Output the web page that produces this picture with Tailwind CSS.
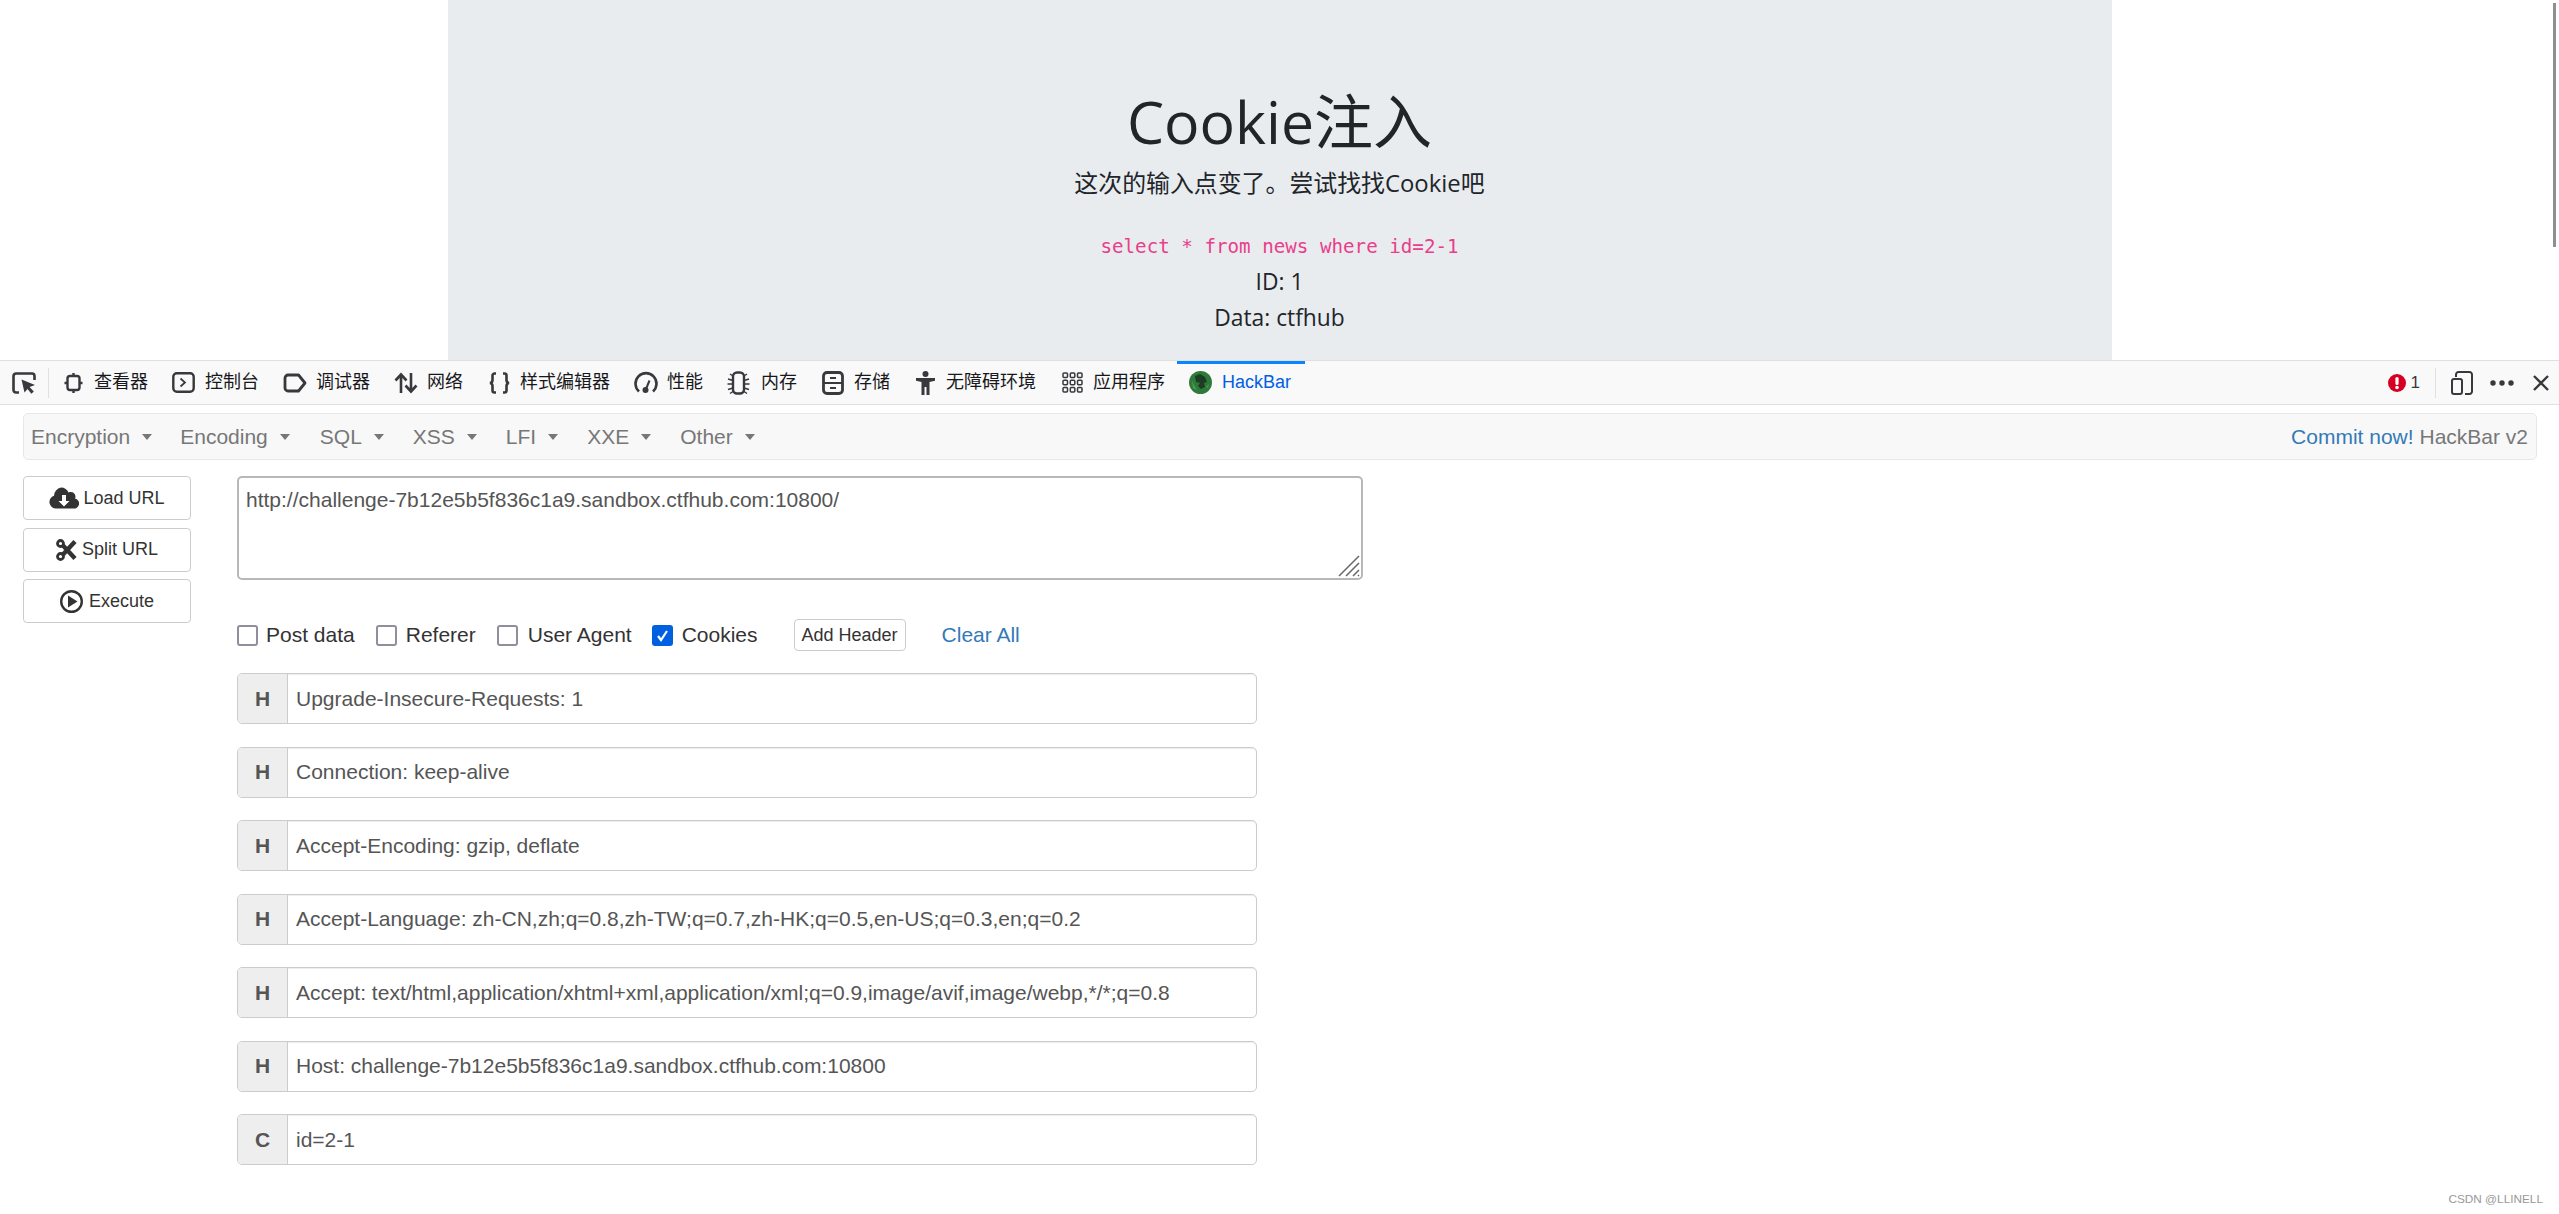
<!DOCTYPE html>
<html lang="zh-CN">
  <head>
    <meta charset="UTF-8" />
    <title>Cookie注入</title>
    <script src="https://cdn.jsdelivr.net/npm/@tailwindcss/browser@4"></script>
  </head>
  <body class="relative h-[1214px] overflow-hidden bg-white font-['Liberation_Sans','Noto_Sans_CJK_SC',sans-serif]">
    <!-- page content -->
    <div class="h-[360px] flex justify-center overflow-hidden">
      <div class="w-[1664px] h-full bg-[#e9ecef] flex flex-col items-center text-[#212529] font-['Open_Sans','Noto_Sans_CJK_SC',sans-serif]">
        <h1 class="mt-[83px] text-[59px] leading-[76px] font-normal">Cookie注入</h1>
        <p class="mt-[8px] text-[23.900px] leading-[32px]">这次的输入点变了。尝试找找Cookie吧</p>
        <code class="mt-[34px] text-[19.200px] leading-[28px] text-[#e83e8c] font-['DejaVu_Sans_Mono',monospace]">select * from news where id=2-1</code>
        <p class="mt-[3px] text-[22.800px] leading-[36px]">ID: 1</p>
        <p class="text-[22.800px] leading-[36px]">Data: ctfhub</p>
      </div>
    </div>

    <!-- devtools toolbar -->
    <div class="h-[45px] border-y border-[#e0e0e2] bg-[#f9f9fa] flex items-center text-[18px] text-[#18181a] relative">
      <svg class="ml-[12px] w-[24px] h-[22px]" viewBox="0 0 24 22" fill="none" stroke="#38383d" stroke-width="2.600">
        <path d="M7 20.500H4a2.500 2.500 0 0 1-2.500-2.500V4A2.500 2.500 0 0 1 4 1.500h16A2.500 2.500 0 0 1 22.500 4v4" />
        <path d="M9.500 7.500l13.500 5.500-5.400 2 4.200 4.600-2.400 2.200-3.900-4.800-3 3.500z" fill="#38383d" stroke="none" />
      </svg>
      <div class="ml-[12px] mr-[15px] w-px h-[30px] bg-[#e0e0e2]"></div>
      <div class="flex items-center gap-[24px]">
        <div class="flex items-center gap-[11px]">
          <svg class="w-[19px] h-[22px]" viewBox="0 0 19 22" fill="none" stroke="#38383d" stroke-width="2.400">
            <rect x="3.500" y="4" width="12" height="14" rx="2.500" />
            <path d="M9.500 1v3M9.500 18v3M.5 11h3M15.500 11h3" />
          </svg>
          <span>查看器</span>
        </div>
        <div class="flex items-center gap-[10px]">
          <svg class="w-[23px] h-[21px]" viewBox="0 0 23 21" fill="none" stroke="#38383d" stroke-width="2.400">
            <rect x="1.300" y="1.300" width="20.400" height="18.400" rx="3.500" />
            <path d="M8.500 6.500l4.500 4-4.500 4" stroke-width="1.700" />
          </svg>
          <span>控制台</span>
        </div>
        <div class="flex items-center gap-[9px]">
          <svg class="w-[24px] h-[20px]" viewBox="0 0 24 20" fill="none" stroke="#38383d" stroke-width="2.800">
            <path d="M5 2h10.500L22 10l-6.500 8H5a3 3 0 0 1-3-3V5a3 3 0 0 1 3-3z" stroke-linejoin="round" />
          </svg>
          <span>调试器</span>
        </div>
        <div class="flex items-center gap-[9px]">
          <svg class="w-[24px] h-[22px]" viewBox="0 0 24 22" fill="none" stroke="#38383d" stroke-width="2.600">
            <path d="M7 21V3M1.500 8.500L7 2.500l5.500 6M17 1v18M11.500 13.500l5.500 6 5.500-6" />
          </svg>
          <span>网络</span>
        </div>
        <div class="flex items-center gap-[10px] ml-[2px]">
          <svg class="w-[21px] h-[22px]" viewBox="0 0 21 22" fill="none" stroke="#38383d" stroke-width="2.600">
            <path d="M7 1.500H5.500a2 2 0 0 0-2 2V8a3 3 0 0 1-2.500 3 3 3 0 0 1 2.500 3v4.500a2 2 0 0 0 2 2H7" />
            <path d="M14 1.500h1.500a2 2 0 0 1 2 2V8a3 3 0 0 0 2.500 3 3 3 0 0 0-2.500 3v4.500a2 2 0 0 1-2 2H14" />
          </svg>
          <span>样式编辑器</span>
        </div>
        <div class="flex items-center gap-[9px]">
          <svg class="w-[24px] h-[24px]" viewBox="0 0 24 24" fill="none" stroke="#38383d" stroke-width="2.600">
            <path d="M5 20.500A10.500 10.500 0 1 1 19 20.500" />
            <path d="M15.500 9.500L12 18" stroke-width="2" />
            <circle cx="11.500" cy="19" r="3" fill="#38383d" stroke="none" />
          </svg>
          <span>性能</span>
        </div>
        <div class="flex items-center gap-[11px]">
          <svg class="w-[23px] h-[24px]" viewBox="0 0 23 24" fill="none" stroke="#38383d" stroke-width="2.400">
            <rect x="6" y="1.500" width="11" height="21" rx="4" />
            <path d="M6 5L3 3M6 9.500L1 8M6 13H.5M6 17l-5 1.500M6 20.500l-3 2M17 5l3-2M17 9.500L22 8M17 13h5.500M17 17l5 1.500M17 20.500l3 2" stroke-width="1.500" />
          </svg>
          <span>内存</span>
        </div>
        <div class="flex items-center gap-[10px] ml-[1px]">
          <svg class="w-[22px] h-[24px]" viewBox="0 0 22 24" fill="none" stroke="#38383d" stroke-width="2.800">
            <rect x="1.500" y="1.500" width="19" height="21" rx="3.500" />
            <path d="M1.500 12h19" stroke-width="2" />
            <path d="M8 7h6M8 17h6" stroke-width="1.800" />
          </svg>
          <span>存储</span>
        </div>
        <div class="flex items-center gap-[10px] ml-[1px]">
          <svg class="w-[21px] h-[24px]" viewBox="0 0 21 24" fill="#38383d">
            <circle cx="10.500" cy="3" r="3" />
            <path d="M1 7h19v2.800l-5.500 1.200v13h-3v-8h-2v8h-3V11L1 9.800z" />
          </svg>
          <span>无障碍环境</span>
        </div>
        <div class="flex items-center gap-[10px] ml-[2px]">
          <svg class="w-[21px] h-[21px]" viewBox="0 0 21 21" fill="none" stroke="#38383d" stroke-width="1.500">
            <rect x="1" y="1" width="4.500" height="4.500" rx="1" />
            <rect x="8.300" y="1" width="4.500" height="4.500" rx="1" />
            <rect x="15.500" y="1" width="4.500" height="4.500" rx="1" />
            <rect x="1" y="8.300" width="4.500" height="4.500" rx="1" />
            <rect x="8.300" y="8.300" width="4.500" height="4.500" rx="1" />
            <rect x="15.500" y="8.300" width="4.500" height="4.500" rx="1" />
            <rect x="1" y="15.500" width="4.500" height="4.500" rx="1" />
            <rect x="8.300" y="15.500" width="4.500" height="4.500" rx="1" />
            <rect x="15.500" y="15.500" width="4.500" height="4.500" rx="1" />
          </svg>
          <span>应用程序</span>
        </div>
        <div class="flex items-center gap-[10px] text-[#0060df]">
          <svg class="w-[23px] h-[23px]" viewBox="0 0 23 23">
            <ellipse cx="11.500" cy="11.500" rx="11.500" ry="11.500" fill="#2f7a3a" />
            <path d="M6 5l5-2 5 3 2 5-3 1 1 4-4 2-3-3 2-3-4-1z" fill="#1c3d22" />
            <path d="M3 9l2 5 3 5-4-2zM17 16l3-3-1 4z" fill="#4b9a52" />
          </svg>
          <span>HackBar</span>
        </div>
      </div>
      <div class="ml-auto flex items-center">
        <svg class="w-[18px] h-[18px]" viewBox="0 0 18 18">
          <circle cx="9" cy="9" r="9" fill="#d70022" />
          <rect x="7.400" y="3" width="3.200" height="8" rx="1.500" fill="#fff" />
          <circle cx="9" cy="13.500" r="1.800" fill="#fff" />
        </svg>
        <span class="ml-[5px] text-[17px] text-[#38383d]">1</span>
        <div class="ml-[15px] w-px h-[30px] bg-[#e0e0e2]"></div>
        <svg class="ml-[15px] w-[22px] h-[24px]" viewBox="0 0 22 24" fill="none" stroke="#38383d" stroke-width="2">
          <path d="M5 6V3.500A2.500 2.500 0 0 1 7.500 1h11A2.500 2.500 0 0 1 21 3.500v17a2.500 2.500 0 0 1-2.500 2.500H14" />
          <rect x="1" y="8" width="10" height="15" rx="2" />
        </svg>
        <svg class="ml-[17px] w-[24px] h-[6px]" viewBox="0 0 24 6" fill="#38383d">
          <circle cx="3" cy="3" r="2.700" />
          <circle cx="12" cy="3" r="2.700" />
          <circle cx="21" cy="3" r="2.700" />
        </svg>
        <svg class="ml-[19px] mr-[10px] w-[16px] h-[16px]" viewBox="0 0 16 16" fill="none" stroke="#38383d" stroke-width="2.400">
          <path d="M1 1l14 14M15 1L1 15" />
        </svg>
      </div>
      <div class="absolute left-[1177px] top-0 w-[128px] h-[3px] bg-[#0a84ff]"></div>
    </div>

    <!-- hackbar -->
    <div class="pl-[23px] pr-[22px] pt-[8px]">
      <div class="h-[47px] border border-[#e7e7e7] rounded-[5px] bg-[#f8f8f8] flex items-center pl-[7px] pr-[8px] text-[21px] text-[#777]">
        <div class="flex items-center gap-[12px] mr-[28px]"><span>Encryption</span><i class="w-0 h-0 border-x-[5px] border-t-[6px] border-x-transparent border-t-[#777]"></i></div>
        <div class="flex items-center gap-[12px] mr-[30px]"><span>Encoding</span><i class="w-0 h-0 border-x-[5px] border-t-[6px] border-x-transparent border-t-[#777]"></i></div>
        <div class="flex items-center gap-[12px] mr-[29px]"><span>SQL</span><i class="w-0 h-0 border-x-[5px] border-t-[6px] border-x-transparent border-t-[#777]"></i></div>
        <div class="flex items-center gap-[12px] mr-[29px]"><span>XSS</span><i class="w-0 h-0 border-x-[5px] border-t-[6px] border-x-transparent border-t-[#777]"></i></div>
        <div class="flex items-center gap-[12px] mr-[29px]"><span>LFI</span><i class="w-0 h-0 border-x-[5px] border-t-[6px] border-x-transparent border-t-[#777]"></i></div>
        <div class="flex items-center gap-[12px] mr-[29px]"><span>XXE</span><i class="w-0 h-0 border-x-[5px] border-t-[6px] border-x-transparent border-t-[#777]"></i></div>
        <div class="flex items-center gap-[12px]"><span>Other</span><i class="w-0 h-0 border-x-[5px] border-t-[6px] border-x-transparent border-t-[#777]"></i></div>
        <div class="ml-auto"><span class="text-[#337ab7]">Commit now!</span> HackBar v2</div>
      </div>

      <div class="mt-[16px] flex gap-[46px]">
        <!-- left buttons -->
        <div class="w-[168px] flex flex-col gap-[7.500px] text-[18px] text-[#333]">
          <button class="h-[44px] border border-[#ccc] rounded-[4px] bg-white flex items-center justify-center gap-[4px]">
            <svg class="w-[30px] h-[22px]" viewBox="0 0 30 22">
              <path d="M7 21.500a6.500 6.500 0 0 1-2-12.700A8.500 8.500 0 0 1 12 .5c3.500 0 6.500 2 7.500 5 .8-.4 1.500-.5 2.500-.5a4.500 4.500 0 0 1 4 6.500 5 5 0 0 1-2 10z" fill="#333" />
              <path d="M13 8h4v6h3.500L15 19.500 9.500 14H13z" fill="#fff" />
            </svg>
            <span>Load URL</span>
          </button>
          <button class="h-[44px] border border-[#ccc] rounded-[4px] bg-white flex items-center justify-center gap-[5px]">
            <svg class="w-[21px] h-[22px]" viewBox="0 0 21 22" fill="none" stroke="#333">
              <circle cx="4.500" cy="4.500" r="3" stroke-width="2.800" />
              <circle cx="4.500" cy="17.500" r="3" stroke-width="2.800" />
              <path d="M7 6.500L19 19.500M7 15.500L19 2.500" stroke-width="4.400" />
            </svg>
            <span>Split URL</span>
          </button>
          <button class="h-[44px] border border-[#ccc] rounded-[4px] bg-white flex items-center justify-center gap-[6px]">
            <svg class="w-[23px] h-[23px]" viewBox="0 0 23 23">
              <circle cx="11.500" cy="11.500" r="10.300" fill="none" stroke="#333" stroke-width="2.400" />
              <path d="M8 5.500l9.500 6-9.500 6z" fill="#333" />
            </svg>
            <span>Execute</span>
          </button>
        </div>

        <!-- right form -->
        <div class="flex-1">
          <div class="relative w-[1126px] h-[104px]">
            <textarea class="w-full h-full resize-none border-2 border-[#b8b8b8] rounded-[5px] bg-white pl-[7px] pt-[8px] text-[21px] leading-[28px] text-[#555] outline-none">http://challenge-7b12e5b5f836c1a9.sandbox.ctfhub.com:10800/</textarea>
            <svg class="absolute right-[3px] bottom-[3px] w-[22px] h-[22px]" viewBox="0 0 22 22" stroke="#666" stroke-width="1.500">
              <path d="M1 21L21 1M8 21L21 8M15 21l6-6M20 21l1-1" />
            </svg>
          </div>

          <div class="mt-[39px] h-[32px] flex items-center text-[21px] text-[#333]">
            <span class="w-[21px] h-[21px] border-2 border-[#8f8f9d] rounded-[3px]"></span>
            <span class="ml-[8px]">Post data</span>
            <span class="ml-[21px] w-[21px] h-[21px] border-2 border-[#8f8f9d] rounded-[3px]"></span>
            <span class="ml-[9px]">Referer</span>
            <span class="ml-[21px] w-[21px] h-[21px] border-2 border-[#8f8f9d] rounded-[3px]"></span>
            <span class="ml-[10px]">User Agent</span>
            <span class="ml-[20px] w-[21px] h-[21px] rounded-[3px] bg-[#0060df] flex items-center justify-center">
              <svg class="w-[13px] h-[13px]" viewBox="0 0 13 13" fill="none" stroke="#fff" stroke-width="2.200"><path d="M2 7l3 4 6-9" /></svg>
            </span>
            <span class="ml-[9px]">Cookies</span>
            <button class="ml-[36px] w-[112px] h-[32px] border border-[#ccc] rounded-[4px] bg-white text-[18px] text-[#333]">Add Header</button>
            <span class="ml-[36px] text-[#337ab7]">Clear All</span>
          </div>

          <div class="mt-[22px] w-[1020px] flex flex-col gap-[22.500px] text-[21px] text-[#555]">
            <div class="h-[51px] flex border border-[#ccc] rounded-[5px] shadow-[inset_0_1px_1px_rgba(0,0,0,0.075)]">
              <div class="w-[50px] bg-[#eee] border-r border-[#ccc] rounded-l-[4px] flex items-center justify-center font-bold">H</div>
              <div class="flex-1 pl-[8px] flex items-center">Upgrade-Insecure-Requests: 1</div>
            </div>
            <div class="h-[51px] flex border border-[#ccc] rounded-[5px] shadow-[inset_0_1px_1px_rgba(0,0,0,0.075)]">
              <div class="w-[50px] bg-[#eee] border-r border-[#ccc] rounded-l-[4px] flex items-center justify-center font-bold">H</div>
              <div class="flex-1 pl-[8px] flex items-center">Connection: keep-alive</div>
            </div>
            <div class="h-[51px] flex border border-[#ccc] rounded-[5px] shadow-[inset_0_1px_1px_rgba(0,0,0,0.075)]">
              <div class="w-[50px] bg-[#eee] border-r border-[#ccc] rounded-l-[4px] flex items-center justify-center font-bold">H</div>
              <div class="flex-1 pl-[8px] flex items-center">Accept-Encoding: gzip, deflate</div>
            </div>
            <div class="h-[51px] flex border border-[#ccc] rounded-[5px] shadow-[inset_0_1px_1px_rgba(0,0,0,0.075)]">
              <div class="w-[50px] bg-[#eee] border-r border-[#ccc] rounded-l-[4px] flex items-center justify-center font-bold">H</div>
              <div class="flex-1 pl-[8px] flex items-center">Accept-Language: zh-CN,zh;q=0.8,zh-TW;q=0.7,zh-HK;q=0.5,en-US;q=0.3,en;q=0.2</div>
            </div>
            <div class="h-[51px] flex border border-[#ccc] rounded-[5px] shadow-[inset_0_1px_1px_rgba(0,0,0,0.075)]">
              <div class="w-[50px] bg-[#eee] border-r border-[#ccc] rounded-l-[4px] flex items-center justify-center font-bold">H</div>
              <div class="flex-1 pl-[8px] flex items-center">Accept: text/html,application/xhtml+xml,application/xml;q=0.9,image/avif,image/webp,*/*;q=0.8</div>
            </div>
            <div class="h-[51px] flex border border-[#ccc] rounded-[5px] shadow-[inset_0_1px_1px_rgba(0,0,0,0.075)]">
              <div class="w-[50px] bg-[#eee] border-r border-[#ccc] rounded-l-[4px] flex items-center justify-center font-bold">H</div>
              <div class="flex-1 pl-[8px] flex items-center">Host: challenge-7b12e5b5f836c1a9.sandbox.ctfhub.com:10800</div>
            </div>
            <div class="h-[51px] flex border border-[#ccc] rounded-[5px] shadow-[inset_0_1px_1px_rgba(0,0,0,0.075)]">
              <div class="w-[50px] bg-[#eee] border-r border-[#ccc] rounded-l-[4px] flex items-center justify-center font-bold">C</div>
              <div class="flex-1 pl-[8px] flex items-center">id=2-1</div>
            </div>
          </div>
        </div>
      </div>
    </div>

    <!-- overlays: scrollbar and watermark -->
    <div class="absolute left-[2553px] top-[3px] w-[3px] h-[244px] bg-[#8f8f8f]"></div>
    <div class="absolute right-[16px] top-[1191px] text-[11.800px] leading-[16px] text-[#999]">CSDN @LLINELL</div>
  </body>
</html>
